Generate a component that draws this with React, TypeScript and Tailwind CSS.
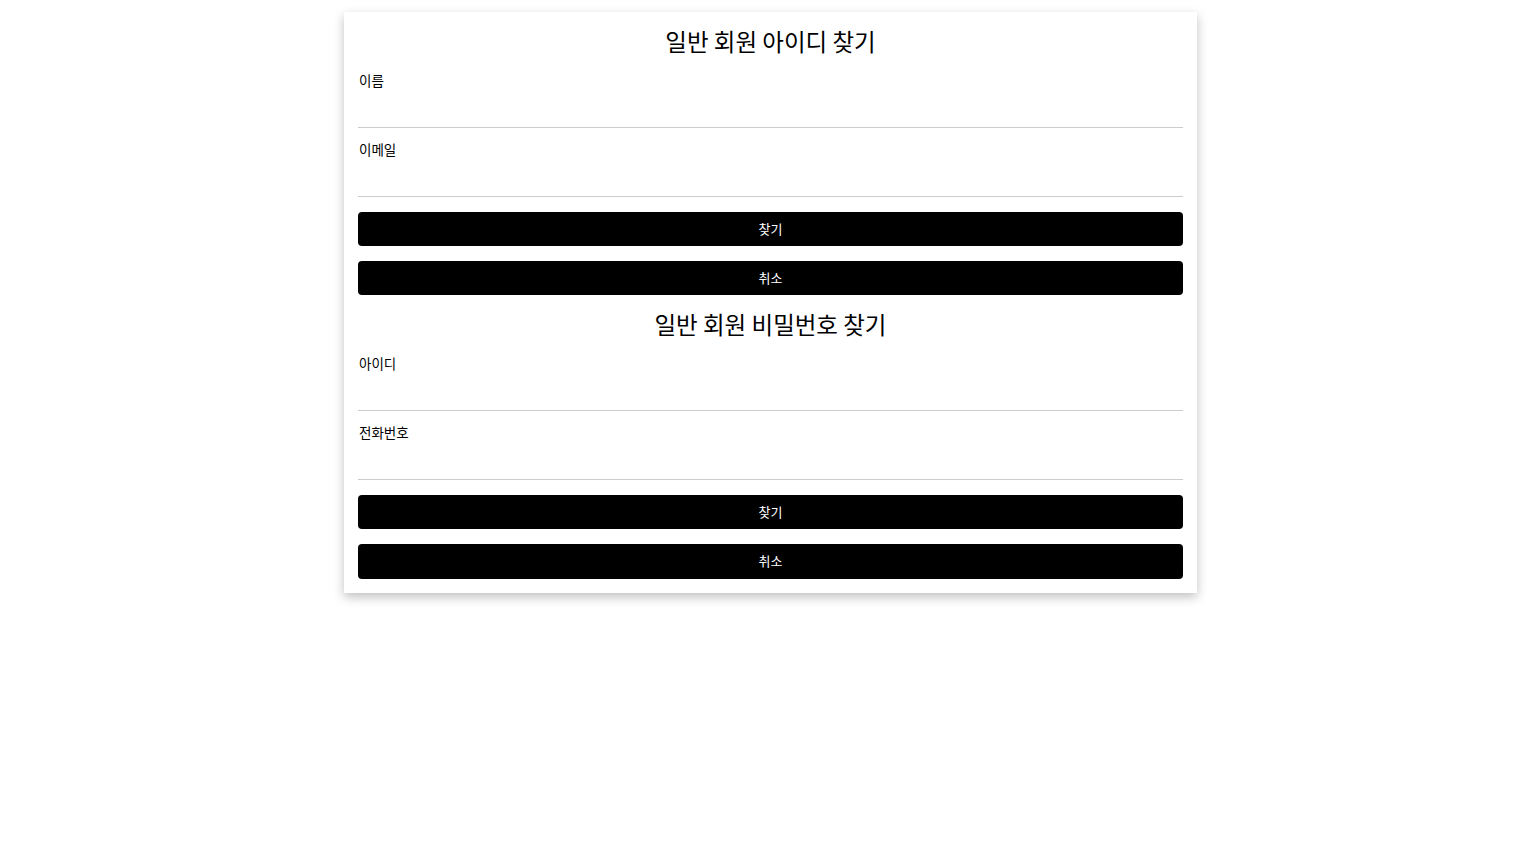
const font = { fontFamily: '"Noto Sans CJK KR", "Noto Sans", sans-serif' }

function Field({ label, first }: { label: string; first?: boolean }) {
    return (
        <div className={first ? "mt-[15px]" : "mt-[14px]"}>
            <label className="block text-[13.5px] leading-[15px] text-black pl-[1px]">{label}</label>
            <input type="text" className="block w-full h-[40px] border-b border-[#cccccc] outline-none bg-transparent text-sm" />
        </div>
    )
}

function Section({ title, labels, top, last }: { title: string; labels: string[]; top?: boolean; last?: boolean }) {
    return (
        <div className={top ? "" : "mt-[14px]"}>
            <h2 className="text-center text-[23.5px] leading-[30px] pb-[2px] font-normal text-black">{title}</h2>
            <Field label={labels[0]} first />
            <Field label={labels[1]} />
            <button className="mt-[15px] w-full h-[34px] pb-[1px] bg-black text-white text-[13px] font-normal rounded-[4px]">찾기</button>
            <button className={`mt-[15px] w-full pb-[1px] bg-black text-white text-[13px] font-normal rounded-[4px] ${last ? "h-[35px]" : "h-[34px]"}`}>취소</button>
        </div>
    )
}

export default function App() {
    return (
        <div className="min-h-screen bg-white pt-[12px]" style={font}>
            <div className="w-[853px] ml-[344px] bg-white p-[14px] shadow-[0_4px_10px_rgba(0,0,0,0.25)]">
                <Section title="일반 회원 아이디 찾기" labels={["이름", "이메일"]} top />
                <Section title="일반 회원 비밀번호 찾기" labels={["아이디", "전화번호"]} last />
            </div>
        </div>
    )
}
